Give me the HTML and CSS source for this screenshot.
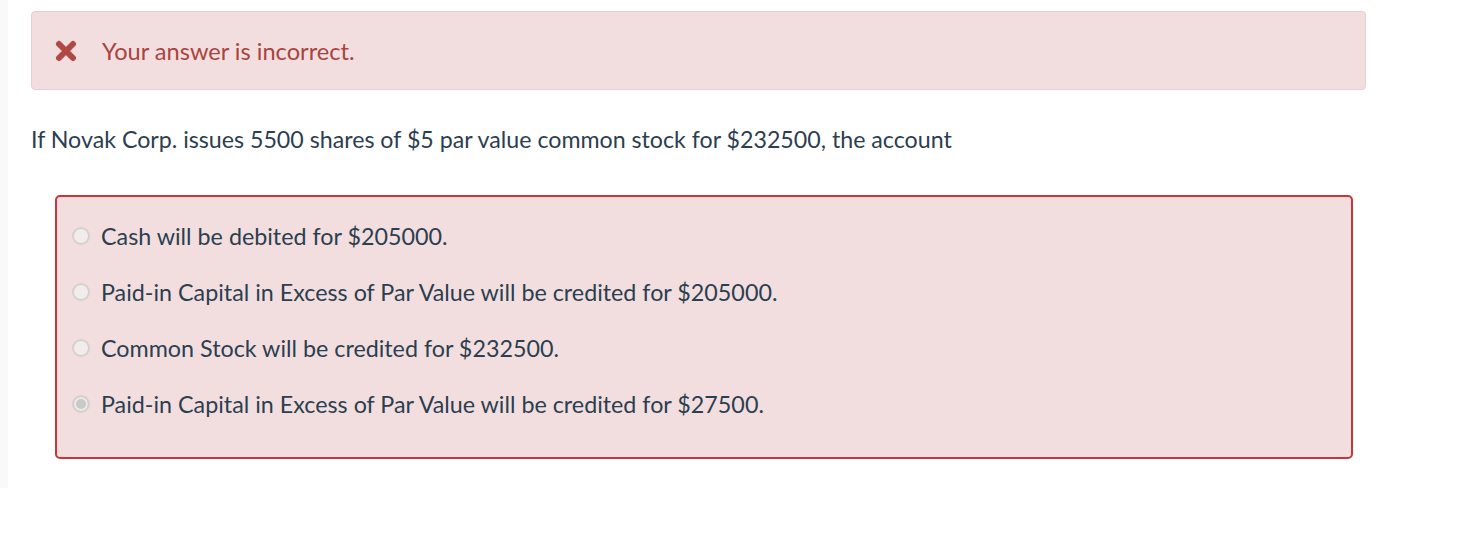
FILE: index.html
```html
<html>
    <head>
        <title>Question</title>
        <link rel="stylesheet" href="styles.css">
    </head>
    <body>
        <div class="page">
            <div class="alert">
                <svg class="alert-icon" width="22" height="22" viewBox="0 0 22 22">
                    <path d="M4 4 L18 18 M18 4 L4 18" stroke="#b04845" stroke-width="6" stroke-linecap="round"/>
                </svg>
                <span>Your answer is incorrect.</span>
            </div>
            <p class="question">If Novak Corp. issues 5500 shares of $5 par value common stock for $232500, the account</p>
            <div class="choices">
                <label class="choice"><span class="radio"></span>Cash will be debited for $205000.</label>
                <label class="choice"><span class="radio"></span>Paid-in Capital in Excess of Par Value will be credited for $205000.</label>
                <label class="choice"><span class="radio"></span>Common Stock will be credited for $232500.</label>
                <label class="choice"><span class="radio checked"></span>Paid-in Capital in Excess of Par Value will be credited for $27500.</label>
            </div>
        </div>
    </body>
</html>
```

FILE: styles.css
```css
body {
    margin: 0;
    background-color: #fff;
    font-family: Lato, "Open Sans", sans-serif;
}
.page {
    border-left: 8px solid #f9f9f9;
    height: 488px;
    padding: 11px 0 0 23px;
    box-sizing: border-box;
}
.alert {
    display: flex;
    align-items: center;
    width: 1335px;
    height: 79px;
    box-sizing: border-box;
    padding-left: 23px;
    background-color: #f2dede;
    border: 1px solid #ebccd1;
    border-radius: 4px;
    color: #a94442;
    font-size: 23.6px;
}
.alert-icon {
    margin-right: 25px;
}
.question {
    margin: 35px 0 0 0;
    color: #2c3e50;
    font-size: 23.2px;
    line-height: 28px;
}
.choices {
    margin: 42px 0 0 24px;
    width: 1298px;
    height: 264px;
    box-sizing: border-box;
    padding-top: 11px;
    background-color: #f2dede;
    border: 2px solid #c9363a;
    border-radius: 5px;
}
.choice {
    display: flex;
    align-items: center;
    height: 56px;
    padding-left: 15px;
    color: #2c3e50;
    font-size: 23.3px;
}
.radio {
    width: 18px;
    height: 18px;
    box-sizing: border-box;
    border: 2px solid #d6d0d0;
    border-radius: 50%;
    background-color: #f1eded;
    margin-right: 11px;
}
.radio.checked {
    background-color: #c9c9c9;
    box-shadow: inset 0 0 0 2px #efeaea;
}
```
